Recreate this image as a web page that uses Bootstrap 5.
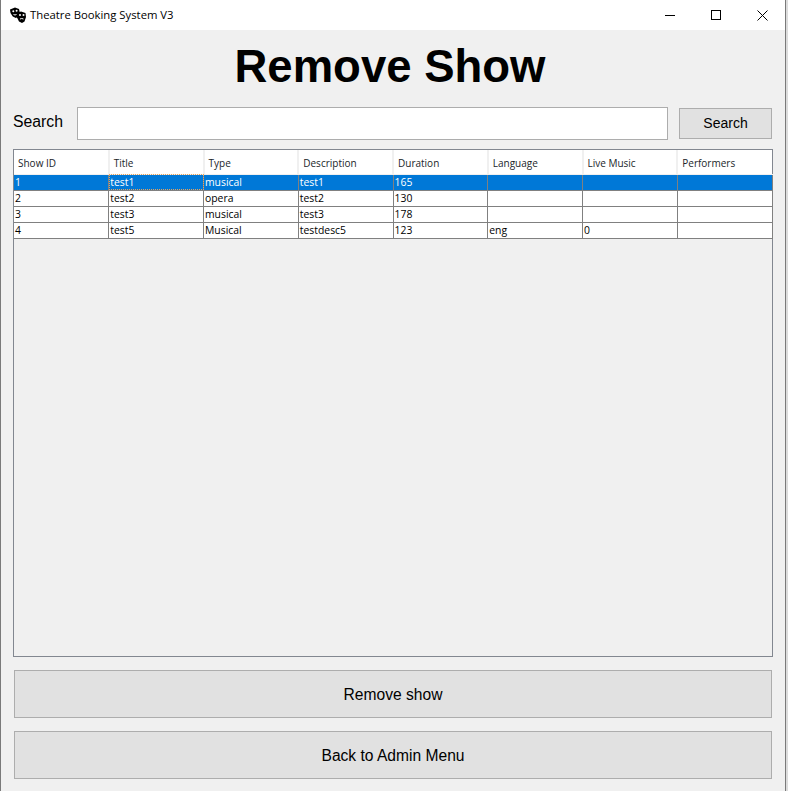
<!DOCTYPE html>
<html lang="en"><head><meta charset="utf-8"><title>Theatre Booking System V3</title>
<link href="https://cdn.jsdelivr.net/npm/bootstrap@5.3.0/dist/css/bootstrap.min.css" rel="stylesheet">
<style>
html,body{height:100%;margin:0;background:#dcdcdc;overflow:hidden}
.qt-win{width:786px;height:791px;background:#f0f0f0;border-left:1px solid #7a7a7a;border-right:1px solid #7a7a7a;font-family:"Liberation Sans",Arial,sans-serif;color:#000}
.qt-titlebar{height:30px;flex:none;background:#fff;font-family:"Open Sans","Noto Sans",sans-serif;font-size:11.3px;padding-left:8px}
.qt-caption{margin-left:3px;color:#000}
.qt-ctl{width:46px;height:30px}
.qt-body{padding:0 13px 0 12px;height:761px}
.qt-heading{font-size:45.5px;font-weight:700;line-height:56px;text-align:center;margin:9px 5px 0 0;height:68px;flex:none}
.qt-search{height:33px;margin-bottom:9px;flex:none}
.qt-label{font-size:15.8px;line-height:20px;margin:0 14px 3px 0;flex:none;width:50px}
.qt-input{width:591px;height:33px;flex:none;border:1px solid #adadad;background:#fff;border-radius:0;padding:0 4px;font-size:14px}
.qt-input:focus{box-shadow:none;border-color:#adadad}
.qt-btn{background:#e1e1e1;border:1px solid #adadad;border-radius:0;color:#000;font-family:"Liberation Sans",Arial,sans-serif;padding:0;flex:none}
.qt-btn:hover,.qt-btn:active{background:#e1e1e1!important;border-color:#adadad!important;color:#000!important}
.qt-btn-sm{width:93px;height:31px;font-size:14px;margin-left:11px}
.qt-btn-lg{height:48px;font-size:15.6px;padding-top:2px;margin:0 0 13px 1px;width:758px;display:block}
.qt-grid{width:760px;height:508px;border:1px solid #828790;background:#f0f0f0;margin:0 0 13px;flex:none}
.qt-tbl{table-layout:fixed;width:758.6px;border-collapse:collapse;font-family:"Open Sans","Noto Sans",sans-serif;font-size:10.4px;margin:0;background:transparent}
.qt-tbl th{height:24px;background:#fff;font-size:10px;font-weight:400;padding:4px 0 0 4px;border-right:2px solid #f0f0f0;border-bottom:1px solid #f0f0f0;white-space:nowrap;vertical-align:middle}
.qt-tbl th:last-child{border-right:0}
.qt-tbl td{height:16px;padding:0 0 0 1px;background:#fff;border:1px solid #808080;border-left:0;border-top:0;line-height:14px;overflow:hidden;white-space:nowrap;color:#000}
.qt-tbl tr.qt-sel td{background:#0078d7;color:#fff}
.qt-focus{outline:1px dotted #e8a35c;outline-offset:-1px}
</style></head><body>
<div class="qt-win d-flex flex-column">
 <div class="qt-titlebar d-flex align-items-center">
  <svg width="18" height="18" viewBox="0 0 18 18" aria-hidden="true"><path fill="#000" d="M1 3.500 6 1.500l4 1.500.8 3.500-1 4-3 1.500-3-1.500L1.500 7z"/><path fill="#000" d="M8 7l4-1.500 4.500 1.500.5 4-1.500 4.500-2.500 1.500-3-1.500-2-4z"/><circle cx="4.300" cy="5.200" r="1" fill="#fff"/><circle cx="7.600" cy="4.700" r="1" fill="#fff"/><circle cx="11" cy="9" r="1" fill="#fff"/><circle cx="14.500" cy="9" r="1" fill="#fff"/><path stroke="#fff" stroke-width="1" fill="none" d="M4.500 8.500q1.500 1 3 0M11 13q1.700-1 3.500 0"/></svg>
  <span class="qt-caption">Theatre Booking System V3</span>
  <div class="ms-auto d-flex">
   <div class="qt-ctl d-flex align-items-center justify-content-center"><svg width="11" height="11" viewBox="0 0 11 11"><path d="M0 5.500h10" stroke="#000" fill="none"/></svg></div>
   <div class="qt-ctl d-flex align-items-center justify-content-center"><svg width="11" height="11" viewBox="0 0 11 11"><rect x=".5" y=".5" width="9" height="9" stroke="#000" fill="none"/></svg></div>
   <div class="qt-ctl d-flex align-items-center justify-content-center"><svg width="11" height="11" viewBox="0 0 11 11"><path d="M.5.500l10 10M10.500.500l-10 10" stroke="#000" fill="none"/></svg></div>
  </div>
 </div>
 <div class="qt-body d-flex flex-column">
  <h1 class="qt-heading">Remove Show</h1>
  <div class="qt-search d-flex align-items-center">
   <label class="qt-label" for="q">Search</label>
   <input id="q" class="form-control qt-input" type="text">
   <button class="btn qt-btn qt-btn-sm" type="button">Search</button>
  </div>
  <div class="qt-grid">
   <table class="table qt-tbl"><thead><tr><th>Show ID</th><th>Title</th><th>Type</th><th>Description</th><th>Duration</th><th>Language</th><th>Live Music</th><th>Performers</th></tr></thead>
   <tbody>
    <tr class="qt-sel"><td>1</td><td class="qt-focus">test1</td><td>musical</td><td>test1</td><td>165</td><td></td><td></td><td></td></tr>
    <tr><td>2</td><td>test2</td><td>opera</td><td>test2</td><td>130</td><td></td><td></td><td></td></tr>
    <tr><td>3</td><td>test3</td><td>musical</td><td>test3</td><td>178</td><td></td><td></td><td></td></tr>
    <tr><td>4</td><td>test5</td><td>Musical</td><td>testdesc5</td><td>123</td><td>eng</td><td>0</td><td></td></tr>
   </tbody></table>
  </div>
  <button class="btn qt-btn qt-btn-lg" type="button">Remove show</button>
  <button class="btn qt-btn qt-btn-lg" type="button">Back to Admin Menu</button>
 </div>
</div>
</body></html>
